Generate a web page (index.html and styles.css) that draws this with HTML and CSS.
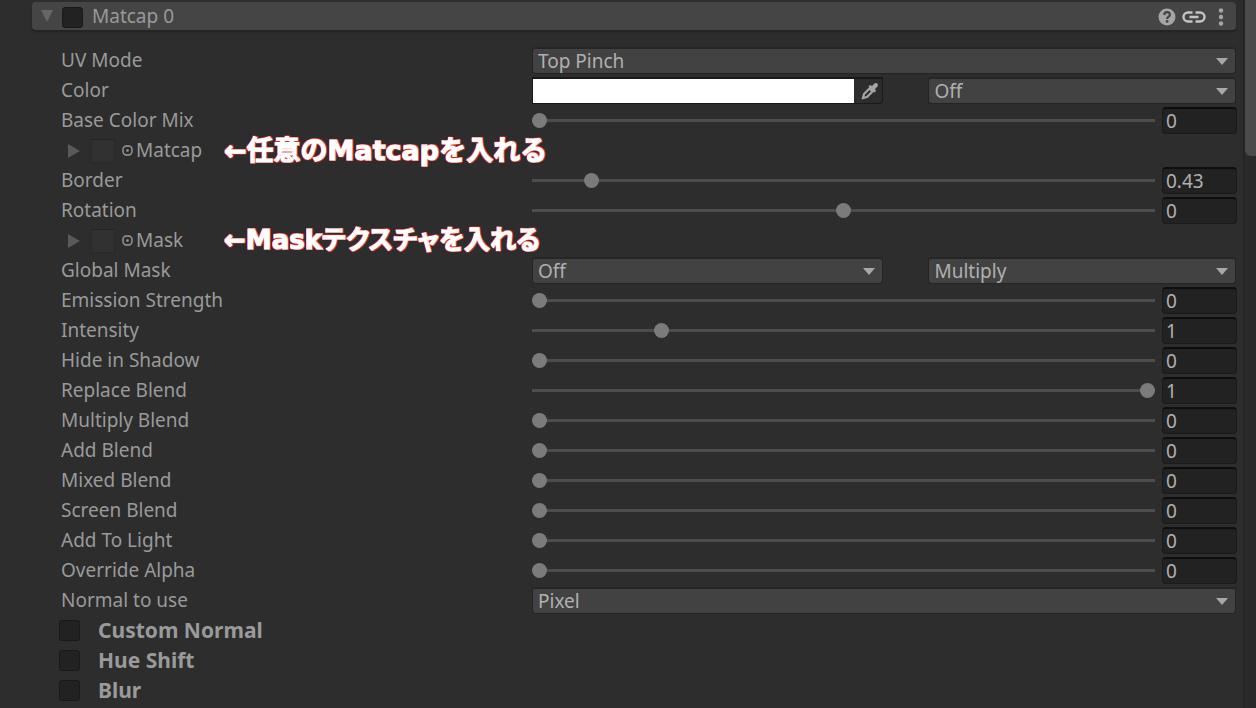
FILE: index.html
```
<!DOCTYPE html>
<html lang="ja">
<head>
  <meta charset="UTF-8" />
  <meta name="viewport" content="width=device-width, initial-scale=1.0"/>
  <title>Matcap 0</title>
  <link rel="stylesheet" href="styles.css">
</head>
<body>

  <main class="inspector">
    <div class="header">
      <button class="foldout open" aria-label="Collapse">
        <svg width="12" height="12" viewBox="0 0 12 12"><path d="M0 0H12L6 12Z"/></svg>
      </button>
      <input type="checkbox" class="check" id="matcap0">
      <label for="matcap0">Matcap 0</label>
      <div class="header-icons">
        <button aria-label="Help">
          <svg width="18" height="18" viewBox="0 0 18 18">
            <circle cx="9" cy="9" r="8.5" fill="#a5a5a5"/>
            <path d="M6.2 7.1C6.2 5.2 7.4 4.2 9 4.2S11.900 5.2 11.900 6.8C11.900 8.6 9.100 8.8 9.100 11" fill="none" stroke="#454545" stroke-width="2.2"/>
            <circle cx="9.100" cy="13.4" r="1.4" fill="#454545"/>
          </svg>
        </button>
        <button aria-label="Link">
          <svg width="24" height="12" viewBox="0 0 24 12" fill="none" stroke="#c4c4c4" stroke-width="2.4">
            <path d="M10.500 1.500H6A4.500 4.500 0 0 0 6 10.500H10.500M13.500 1.500H18A4.500 4.500 0 0 1 18 10.500H13.500M7.500 6H16.500"/>
          </svg>
        </button>
        <button aria-label="Menu">
          <svg width="6" height="18" viewBox="0 0 6 18" fill="#a5a5a5">
            <circle cx="3" cy="2.5" r="2.2"/><circle cx="3" cy="9" r="2.2"/><circle cx="3" cy="15.5" r="2.2"/>
          </svg>
        </button>
      </div>
    </div>

    <div class="props">
      <div class="row">
        <label for="uvmode">UV Mode</label>
        <div class="field"><select id="uvmode"><option>Top Pinch</option></select></div>
      </div>
      <div class="row">
        <label for="color">Color</label>
        <div class="field split">
          <div class="color-field">
            <input type="color" id="color" value="#ffffff">
            <button aria-label="Pick color">
              <svg width="18" height="18" viewBox="0 0 18 18">
                <path d="M8.500 6.500L3 12L2 16L6 15L11.500 9.500Z" fill="none" stroke="#a5a5a5" stroke-width="2.2"/>
                <path d="M7.500 4.500L9 3L11 4L13.500 1.500C15.500 0 18 2.500 16.500 4.500L14 7L15 9L13.500 10.500Z" fill="#a5a5a5"/>
              </svg>
            </button>
          </div>
          <select aria-label="Color animation"><option>Off</option></select>
        </div>
      </div>
      <div class="row">
        <label for="basemix">Base Color Mix</label>
        <div class="field slider"><input type="range" id="basemix" min="0" max="1" step="any" value="0"><input type="text" value="0" aria-label="Base Color Mix value"></div>
      </div>
      <div class="row texture">
        <button class="foldout" aria-label="Expand Matcap"><svg width="12" height="14" viewBox="0 0 12 14"><path d="M0 0L12 7L0 14Z"/></svg></button>
        <button class="thumb" aria-label="Matcap texture"></button>
        <svg class="target" width="11" height="11" viewBox="0 0 11 11"><rect x="1" y="1" width="9" height="9" rx="3.5"/><circle cx="5.5" cy="5.5" r=".6"/></svg>
        <span class="name">Matcap</span>
        <span class="note">←任意のMatcapを入れる</span>
      </div>
      <div class="row">
        <label for="border">Border</label>
        <div class="field slider"><input type="range" id="border" min="0" max="5" step="any" value="0.43"><input type="text" value="0.43" aria-label="Border value"></div>
      </div>
      <div class="row">
        <label for="rotation">Rotation</label>
        <div class="field slider"><input type="range" id="rotation" min="-1" max="1" step="any" value="0"><input type="text" value="0" aria-label="Rotation value"></div>
      </div>
      <div class="row texture">
        <button class="foldout" aria-label="Expand Mask"><svg width="12" height="14" viewBox="0 0 12 14"><path d="M0 0L12 7L0 14Z"/></svg></button>
        <button class="thumb" aria-label="Mask texture"></button>
        <svg class="target" width="11" height="11" viewBox="0 0 11 11"><rect x="1" y="1" width="9" height="9" rx="3.5"/><circle cx="5.5" cy="5.5" r=".6"/></svg>
        <span class="name">Mask</span>
        <span class="note compact">←Maskテクスチャを入れる</span>
      </div>
      <div class="row">
        <label for="globalmask">Global Mask</label>
        <div class="field split">
          <select id="globalmask"><option>Off</option></select>
          <select aria-label="Global Mask blend"><option>Multiply</option></select>
        </div>
      </div>
      <div class="row">
        <label for="emission">Emission Strength</label>
        <div class="field slider"><input type="range" id="emission" min="0" max="20" step="any" value="0"><input type="text" value="0" aria-label="Emission Strength value"></div>
      </div>
      <div class="row">
        <label for="intensity">Intensity</label>
        <div class="field slider"><input type="range" id="intensity" min="0" max="5" step="any" value="1"><input type="text" value="1" aria-label="Intensity value"></div>
      </div>
      <div class="row">
        <label for="hideshadow">Hide in Shadow</label>
        <div class="field slider"><input type="range" id="hideshadow" min="0" max="1" step="any" value="0"><input type="text" value="0" aria-label="Hide in Shadow value"></div>
      </div>
      <div class="row">
        <label for="replace">Replace Blend</label>
        <div class="field slider"><input type="range" id="replace" min="0" max="1" step="any" value="1"><input type="text" value="1" aria-label="Replace Blend value"></div>
      </div>
      <div class="row">
        <label for="multiply">Multiply Blend</label>
        <div class="field slider"><input type="range" id="multiply" min="0" max="1" step="any" value="0"><input type="text" value="0" aria-label="Multiply Blend value"></div>
      </div>
      <div class="row">
        <label for="add">Add Blend</label>
        <div class="field slider"><input type="range" id="add" min="0" max="1" step="any" value="0"><input type="text" value="0" aria-label="Add Blend value"></div>
      </div>
      <div class="row">
        <label for="mixed">Mixed Blend</label>
        <div class="field slider"><input type="range" id="mixed" min="0" max="1" step="any" value="0"><input type="text" value="0" aria-label="Mixed Blend value"></div>
      </div>
      <div class="row">
        <label for="screen">Screen Blend</label>
        <div class="field slider"><input type="range" id="screen" min="0" max="1" step="any" value="0"><input type="text" value="0" aria-label="Screen Blend value"></div>
      </div>
      <div class="row">
        <label for="addlight">Add To Light</label>
        <div class="field slider"><input type="range" id="addlight" min="0" max="1" step="any" value="0"><input type="text" value="0" aria-label="Add To Light value"></div>
      </div>
      <div class="row">
        <label for="alpha">Override Alpha</label>
        <div class="field slider"><input type="range" id="alpha" min="0" max="1" step="any" value="0"><input type="text" value="0" aria-label="Override Alpha value"></div>
      </div>
      <div class="row">
        <label for="normal">Normal to use</label>
        <div class="field"><select id="normal"><option>Pixel</option></select></div>
      </div>
      <div class="row toggle"><input type="checkbox" class="check" id="customnormal"><label for="customnormal">Custom Normal</label></div>
      <div class="row toggle"><input type="checkbox" class="check" id="hueshift"><label for="hueshift">Hue Shift</label></div>
      <div class="row toggle"><input type="checkbox" class="check" id="blur"><label for="blur">Blur</label></div>
    </div>
  </main>

  <div class="scrollbar"><div class="scroll-thumb"></div></div>

</body>
</html>
```
FILE: styles.css
```
* {
  margin: 0;
  padding: 0;
  box-sizing: border-box;
}

body {
  display: flex;
  min-height: 100vh;
  background-color: #2d2d2d;
  color: #9a9a9a;
  font-family: "Noto Sans", "Noto Sans CJK JP", sans-serif;
  font-size: 19px;
  line-height: 27px;
  overflow: hidden;
}

button, input, select {
  font: inherit;
  color: inherit;
  border: none;
  background: none;
}

button {
  display: flex;
  align-items: center;
  justify-content: center;
}

.inspector {
  flex: 1;
  padding: 2px 6px 0 32px;
}

.header {
  display: flex;
  align-items: center;
  height: 28px;
  margin-right: 1px;
  padding: 0 12px 0 9px;
  border-radius: 4px;
  background-color: #454545;
  box-shadow: 0 2px 2px #232323;
}

.header label {
  margin-left: 9px;
}

.header .check {
  margin: 2px 0 0 9px;
}

.header-icons {
  display: flex;
  align-items: center;
  gap: 6px;
  margin-left: auto;
  padding-top: 2px;
}

.header-icons button:last-child {
  margin-left: 6px;
}

.foldout svg {
  fill: #595959;
}

.foldout.open svg {
  fill: #666;
}

.check {
  appearance: none;
  width: 21px;
  height: 21px;
  border: 1px solid #191919;
  border-radius: 3px;
  background-color: #222;
}

.props {
  margin-top: 16px;
  padding-left: 29px;
}

.row {
  display: grid;
  grid-template-columns: 471px 1fr;
  align-items: center;
  height: 30px;
  padding-bottom: 1px;
  white-space: nowrap;
}

.field {
  display: grid;
  align-items: center;
  min-width: 0;
  padding-right: 1px;
}

.field.split {
  grid-template-columns: 8fr 7fr;
  gap: 45px;
}

.field.slider {
  grid-template-columns: 1fr 75px;
  gap: 7px;
  padding: 0;
}

select {
  appearance: none;
  width: 100%;
  height: 27px;
  padding: 0 28px 0 5px;
  border: 1px solid #242424;
  border-top: 2px solid #262626;
  border-radius: 4px;
  color: #b0b0b0;
  line-height: 24px;
  background: url("data:image/svg+xml,%3Csvg xmlns='http://www.w3.org/2000/svg' width='12' height='7'%3E%3Cpath d='M0 0H12L6 7Z' fill='%23a8a8a8'/%3E%3C/svg%3E") no-repeat right 7px center #424242;
}

.color-field {
  display: flex;
  height: 27px;
  border: 1px solid #191919;
  border-top-width: 2px;
  border-radius: 0 0 4px 0;
}

.color-field input {
  appearance: none;
  flex: 1;
  height: 24px;
}

.color-field input::-webkit-color-swatch-wrapper {
  padding: 0;
}

.color-field input::-webkit-color-swatch {
  border: none;
}

.color-field button {
  width: 28px;
  padding-left: 3px;
}

input[type="range"] {
  appearance: none;
  width: 100%;
  height: 15px;
  background: linear-gradient(#4d4d4d, #4d4d4d) center / 100% 3px no-repeat;
}

input[type="range"]::-webkit-slider-thumb {
  appearance: none;
  width: 15px;
  height: 15px;
  border-radius: 50%;
  background-color: #7b7b7b;
}

input[type="text"] {
  width: 100%;
  height: 27px;
  padding: 0 3px;
  border: 1px solid #1a1a1a;
  border-top: 2px solid #0e0e0e;
  border-radius: 4px;
  background-color: #222;
  color: #b0b0b0;
  line-height: 24px;
}

.row.texture {
  display: flex;
  padding-left: 7px;
}

.thumb {
  width: 24px;
  height: 24px;
  margin: 0 7px 0 11px;
  border: 1px solid #292929;
  border-top-color: #242424;
  background-color: #313131;
}

.target {
  margin-right: 3px;
  fill: none;
  stroke: #9a9a9a;
  stroke-width: 1.4;
}

.name {
  width: 88px;
}

.note {
  color: #fff;
  font-family: "DejaVu Sans", "Noto Sans CJK JP", sans-serif;
  font-size: 27px;
  font-weight: bold;
  -webkit-text-stroke: 1px #fff;
  text-shadow: 1px 1px 0 #e83030, -1px 1px 0 #e83030, 1px -1px 0 #e83030, -1px -1px 0 #e83030;
}

.note.compact {
  font-size: 26px;
  font-feature-settings: "palt";
}

.row.toggle {
  display: flex;
  gap: 18px;
  margin-left: -2px;
  font-size: 21px;
  font-weight: bold;
}

.scrollbar {
  width: 13px;
  padding-left: 1px;
  border-left: 1px solid #232323;
  background-color: #292929;
}

.scroll-thumb {
  height: 156px;
  border-radius: 0 0 0 6px;
  background-color: #4b4b4b;
}
```
